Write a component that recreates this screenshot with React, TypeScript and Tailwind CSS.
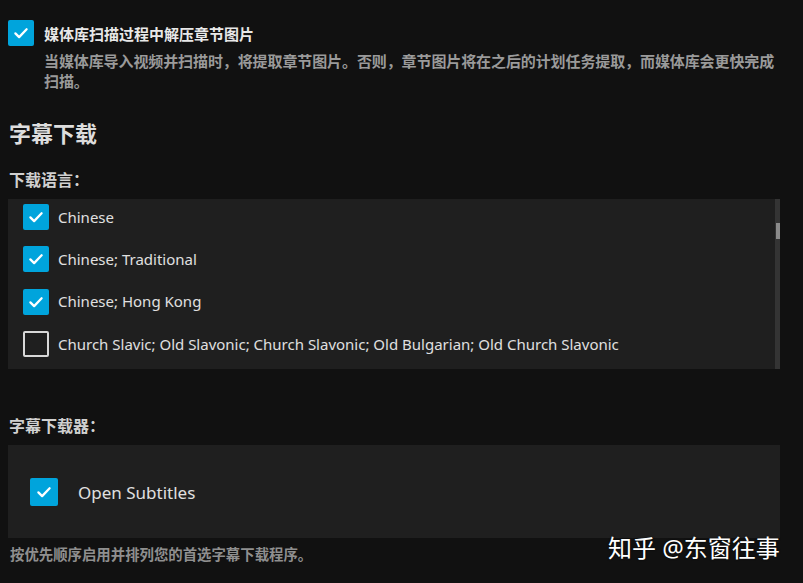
import React from 'react';

const font = { fontFamily: '"Noto Sans", "Noto Sans CJK SC", sans-serif' };

function Check({ checked, size = 26 }: { checked: boolean; size?: number }) {
  if (!checked) {
    return <div className="shrink-0 rounded-[2px] border-2 border-[#d8d8d8]" style={{ width: size, height: size }} />;
  }
  return (
    <div className="shrink-0 rounded-[2px] bg-[#00a4dc] flex items-center justify-center" style={{ width: size, height: size }}>
      <svg width="18" height="18" viewBox="0 0 24 24" fill="none" stroke="white" strokeWidth="3" strokeLinecap="round" strokeLinejoin="round">
        <path d="M4.5 12.5l5 5 10-10.5" />
      </svg>
    </div>
  );
}

const languages = [
  { name: 'Chinese', checked: true },
  { name: 'Chinese; Traditional', checked: true },
  { name: 'Chinese; Hong Kong', checked: true },
  { name: 'Church Slavic; Old Slavonic; Church Slavonic; Old Bulgarian; Old Church Slavonic', checked: false },
];

export default function App() {
  return (
    <div className="relative w-[803px] h-[583px] overflow-hidden bg-[#111111] text-[#e0e0e0]" style={font}>
      <div className="pt-[20px] pl-[8px] pr-[23px]">
        {/* chapter image option */}
        <div className="flex gap-[10px]">
          <Check checked />
          <div className="pt-[4px]">
            <div className="text-[15px] leading-[20px] font-bold text-[#e8e8e8]">媒体库扫描过程中解压章节图片</div>
            <div className="mt-[7px] text-[15px] leading-[20px] font-bold text-[#9a9a9a] w-[736px] tracking-[-0.1px]">
              当媒体库导入视频并扫描时，将提取章节图片。否则，章节图片将在之后的计划任务提取，而媒体库会更快完成扫描。
            </div>
          </div>
        </div>

        <h2 className="mt-[27px] pl-[1px] text-[22px] leading-[30px] font-bold text-[#dddddd]">字幕下载</h2>

        <div className="mt-[21px] pl-[1px] text-[16px] leading-[22px] font-bold text-[#d0d0d0]">下载语言：</div>

        <div className="relative mt-[8px] h-[170px] w-[772px] overflow-hidden bg-[#1f1f1f]">
          <div className="-mt-[3px]">
            {languages.map((l) => (
              <div key={l.name} className="flex h-[42.3px] items-center gap-[9px] pl-[15px]">
                <Check checked={l.checked} />
                <span className="text-[15px] text-[#e0e0e0]">{l.name}</span>
              </div>
            ))}
          </div>
          {/* scrollbar */}
          <div className="absolute right-0 top-0 h-full w-[5px] bg-[#343434]">
            <div className="mt-[24px] h-[16px] w-[4px] ml-[1px] bg-[#8a8a8a]" />
          </div>
        </div>

        <div className="mt-[46px] pl-[1px] text-[16px] leading-[22px] font-bold text-[#d0d0d0]">字幕下载器：</div>

        <div className="mt-[8px] flex h-[93px] w-[772px] items-center gap-[20px] bg-[#1f1f1f] pl-[22px]">
          <Check checked size={28} />
          <span className="text-[17px] text-[#e0e0e0] pt-[3px]">Open Subtitles</span>
        </div>

        <div className="mt-[7px] pl-[2px] text-[14.4px] leading-[20px] font-bold text-[#8f8f8f]">
          按优先顺序启用并排列您的首选字幕下载程序。
        </div>
      </div>

      {/* watermark */}
      <div
        className="absolute left-[608px] top-[532px] text-[24px] leading-[32px] text-white"
        style={{ textShadow: '0 0 2px rgba(0,0,0,0.8)' }}
      >
        知乎 @东窗往事
      </div>
    </div>
  );
}
